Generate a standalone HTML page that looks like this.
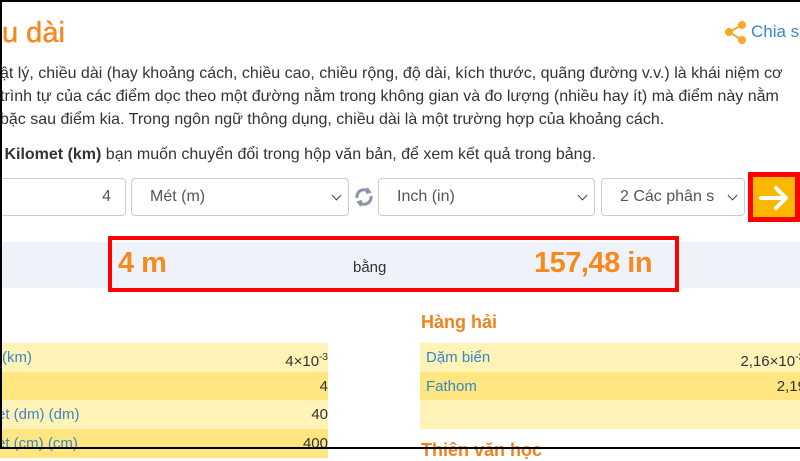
<!DOCTYPE html>
<html><head><meta charset="utf-8"><style>
*{margin:0;padding:0;box-sizing:border-box}
body{width:800px;height:450px;overflow:hidden;background:#fff;font-family:"Liberation Sans",Arial,sans-serif;color:#333;position:relative}
.a{position:absolute;white-space:nowrap}
.p{font-size:16px;color:#333}
.sel{position:absolute;top:178px;height:38px;border:1px solid #ccc;border-radius:4px;background:#fff;font-size:16px;color:#555;line-height:36px;padding-left:18px}
.chev{position:absolute;right:8px;top:13px;width:7px;height:7px;border-right:1.5px solid #444;border-bottom:1.5px solid #444;transform:rotate(45deg)}
.row{position:absolute;height:29px;font-size:15px;line-height:29px}
.l{background:#fff3b8}.d{background:#ffe680}
.lab{position:absolute;left:6px;color:#3a87c8}
.val{position:absolute;right:0px;color:#333}
.h{position:absolute;color:#f0821e;font-weight:bold;font-size:18px}
</style></head><body>
<div style="position:absolute;left:0;top:0;width:800px;height:449px;border:2px solid #000;border-right:none;z-index:5;pointer-events:none"></div>
<div class="a" style="left:2px;top:17px;font-size:29px;color:#f7891e;-webkit-text-stroke:0.5px #f7891e">u dài</div>
<svg class="a" style="left:724px;top:20px" width="24" height="24" viewBox="0 0 24 24"><circle cx="18" cy="5" r="4" fill="#f9a825"/><circle cx="5" cy="12" r="4" fill="#f9a825"/><circle cx="18" cy="20" r="4" fill="#f9a825"/><path d="M18 5L5 12L18 20" stroke="#f9a825" stroke-width="2" fill="none"/></svg>
<div class="a" style="left:751px;top:22px;font-size:17px;color:#3a87c8">Chia sẻ</div>
<div class="a p" style="left:0;top:65px">ật lý, chiều dài (hay khoảng cách, chiều cao, chiều rộng, độ dài, kích thước, quãng đường v.v.) là khái niệm cơ</div>
<div class="a p" style="left:0;top:88px">trình tự của các điểm dọc theo một đường nằm trong không gian và đo lượng (nhiều hay ít) mà điểm này nằm</div>
<div class="a p" style="left:0;top:111px">bặc sau điểm kia. Trong ngôn ngữ thông dụng, chiều dài là một trường hợp của khoảng cách.</div>
<div class="a p" style="left:0;top:146px"><b style="color:#333">&nbsp;Kilomet (km)</b> bạn muốn chuyển đổi trong hộp văn bản, để xem kết quả trong bảng.</div>
<div class="sel" style="left:-10px;width:136px;text-align:right;padding-right:14px">4</div>
<div class="sel" style="left:131px;width:218px">Mét (m)<span class="chev"></span></div>
<svg class="a" style="left:352px;top:185px" width="24" height="24" viewBox="0 0 24 24" fill="none" stroke="#8a94a6" stroke-width="3"><path d="M5 13A7 7 0 0 1 17 7"/><path d="M19 11A7 7 0 0 1 7 17"/><path d="M15 3l3 4-4 1" stroke-width="2"/><path d="M9 21l-3-4 4-1" stroke-width="2"/></svg>
<div class="sel" style="left:378px;width:217px">Inch (in)<span class="chev"></span></div>
<div class="sel" style="left:601px;width:144px">2 Các phân s<span class="chev"></span></div>
<div class="a" style="left:748px;top:172px;width:52px;height:50px;background:#f00"></div>
<div class="a" style="left:753px;top:177px;width:42px;height:40px;background:#fbb800"></div>
<svg class="a" style="left:758px;top:184px" width="32" height="28" viewBox="0 0 32 28" fill="none" stroke="#fff" stroke-width="4" stroke-linecap="round" stroke-linejoin="round"><path d="M3 14H28M18 4L28 14L18 24"/></svg>
<div class="a" style="left:0;top:242px;width:800px;height:46px;background:#eef2fb"></div>
<div class="a" style="left:108px;top:236px;width:571px;height:56px;border:4px solid #f00"></div>
<div class="a" style="left:118px;top:247px;font-size:29px;font-weight:bold;color:#f7891e;letter-spacing:-0.5px">4 m</div>
<div class="a" style="left:353px;top:259px;font-size:15px">bằng</div>
<div class="a" style="left:534px;top:247px;font-size:29px;font-weight:bold;color:#f7891e;letter-spacing:-0.5px">157,48 in</div>
<div class="h" style="left:-4px;top:312px">t</div>
<div class="h" style="left:421px;top:312px">Hàng hải</div>
<div class="row l" style="left:0;top:343px;width:328px"><span class="lab" style="left:2px">(km)</span><span class="val">4×10<sup style="font-size:10px">-3</sup></span></div>
<div class="row d" style="left:0;top:372px;width:328px"><span class="lab" style="left:-2px">)</span><span class="val">4</span></div>
<div class="row l" style="left:0;top:400px;width:328px"><span class="lab" style="left:-3px">et (dm) (dm)</span><span class="val">40</span></div>
<div class="row d" style="left:0;top:429px;width:328px"><span class="lab" style="left:-3px">et (cm) (cm)</span><span class="val">400</span></div>
<div class="row l" style="left:420px;top:343px;width:380px"><span class="lab">Dặm biển</span><span class="val" style="right:-4px">2,16×10<sup style="font-size:10px">-3</sup></span></div>
<div class="row d" style="left:420px;top:372px;width:380px"><span class="lab">Fathom</span><span class="val" style="right:-6px">2,19</span></div>
<div class="row l" style="left:420px;top:400px;width:380px"></div>
<div class="h" style="left:421px;top:440px">Thiên văn học</div>
</body></html>
